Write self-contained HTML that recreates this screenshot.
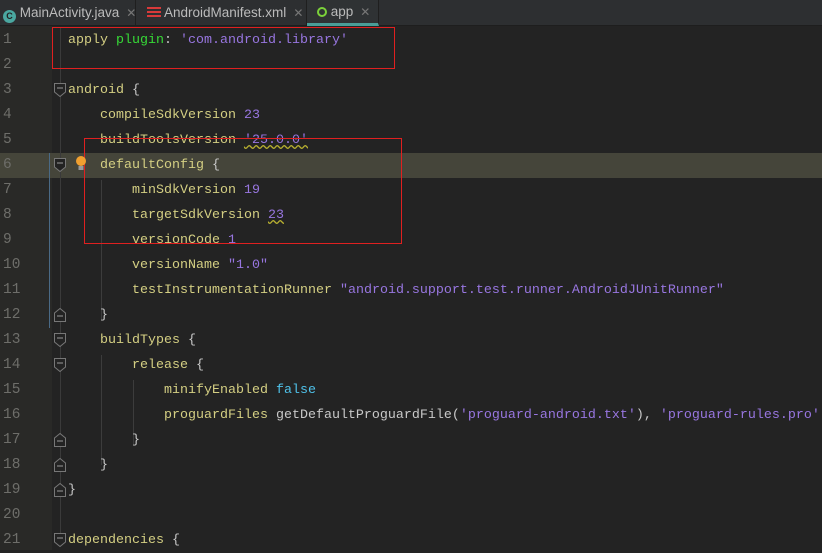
<!DOCTYPE html>
<html><head><meta charset="utf-8"><style>
*{margin:0;padding:0;box-sizing:border-box}
body{width:822px;height:550px;overflow:hidden;background:#232323;font-family:"Liberation Mono",monospace;position:relative}
.tabs{position:absolute;left:0;top:0;width:822px;height:26px;background:#2d2f31;border-bottom:1px solid #1e1e1e;font-family:"Liberation Sans",sans-serif;font-size:13.5px;color:#bbbbbb}
.tab{position:absolute;top:0;height:25px;line-height:25px;border-right:1px solid #1f1f1f;white-space:nowrap;overflow:hidden}
.tab .x{color:#777;font-size:12px;margin-left:7px}
.gutter{position:absolute;left:0;top:26px;width:52px;height:524px;background:#292927}
.ln{position:absolute;left:3px;font-size:14.5px;color:#6e6e6a;height:25px;line-height:25px}
.code{position:absolute;left:0;font-size:13.33px;white-space:pre;height:25px;line-height:25px;color:#d4cf83}
.y{color:#d4cf83}.p{color:#9876e0}.g{color:#36d936}.w{color:#c8c8c8}.c{color:#4fc1e9}
.hl{position:absolute;left:0;top:153px;width:822px;height:25px;background:#45453a}
.guide{position:absolute;width:1px;background:#3c3c3c}
.box{position:absolute;border:1px solid #e02020}
.fold{position:absolute;left:54px;width:12px;height:14px}
</style></head><body>
<div class="tabs">
 <div class="tab" style="left:0;width:136px;padding-left:3px"><span style="display:inline-block;width:13px;height:13px;border-radius:50%;background:#4aa7a0;color:#222;font-size:9px;line-height:13px;text-align:center;font-weight:bold;vertical-align:-2px">C</span> MainActivity.java<span class="x">✕</span></div>
 <div class="tab" style="left:137px;width:170px;padding-left:10px"><span style="display:inline-block;width:14px;height:11px;vertical-align:-1px;background:repeating-linear-gradient(#d83a3a 0 2px,transparent 2px 4px)"></span> AndroidManifest.xml<span class="x">✕</span></div>
 <div class="tab" style="left:307px;width:72px;padding-left:10px;background:#2f3234;border-bottom:3px solid #4a9e98;height:26px;line-height:24px"><span style="display:inline-block;width:10px;height:10px;border-radius:50%;border:2px solid #7bd13a;vertical-align:-1px"></span> app<span class="x">✕</span></div>
</div>
<div class="gutter"></div>
<div class="hl"></div>
<div class="guide" style="left:49px;top:153px;height:175px;background:#4a6a86"></div>
<div class="guide" style="left:60px;top:28px;height:510px;background:#3a3a3a"></div>
<div class="guide" style="left:101px;top:180px;height:140px"></div>
<div class="guide" style="left:101px;top:355px;height:110px"></div>
<div class="guide" style="left:133px;top:380px;height:65px"></div>
<div id="c"></div>
<div class="box" style="left:52px;top:27px;width:343px;height:42px"></div>
<div class="box" style="left:84px;top:138px;width:318px;height:106px"></div>
<svg style="position:absolute;left:74px;top:155px" width="14" height="18"><circle cx="7" cy="6" r="5" fill="#f0a030"/><rect x="4.5" y="11" width="5" height="4" fill="#999"/></svg>
<script>
var L=[
'<span class="y">apply</span> <span class="g">plugin</span><span class="w">: </span><span class="p">\'com.android.library\'</span>',
'',
'<span class="y">android</span> <span class="w">{</span>',
'    compileSdkVersion <span class="p">23</span>',
'    buildToolsVersion <span class="p" style="text-decoration:underline wavy #b8b030">\'25.0.0\'</span>',
'    defaultConfig <span class="w">{</span>',
'        minSdkVersion <span class="p">19</span>',
'        targetSdkVersion <span class="p" style="text-decoration:underline wavy #b8b030">23</span>',
'        versionCode <span class="p">1</span>',
'        versionName <span class="p">"1.0"</span>',
'        testInstrumentationRunner <span class="p">"android.support.test.runner.AndroidJUnitRunner"</span>',
'    <span class="w">}</span>',
'    buildTypes <span class="w">{</span>',
'        release <span class="w">{</span>',
'            minifyEnabled <span class="c">false</span>',
'            proguardFiles <span class="w">getDefaultProguardFile(</span><span class="p">\'proguard-android.txt\'</span><span class="w">), </span><span class="p">\'proguard-rules.pro\'</span>',
'        <span class="w">}</span>',
'    <span class="w">}</span>',
'<span class="w">}</span>',
'',
'<span class="y">dependencies</span> <span class="w">{</span>'];
var open={3:1,6:1,13:1,14:1,21:1},close={12:1,17:1,18:1,19:1};
var h='';
for(var i=0;i<L.length;i++){var t=28+i*25,n=i+1;
h+='<div class="ln" style="top:'+t+'px">'+n+'</div>';
h+='<div class="code" style="left:68px;top:'+t+'px">'+L[i]+'</div>';
if(open[n])h+='<svg class="fold" style="top:'+(t+5)+'px" viewBox="0 0 12 14"><path d="M0.5 0.5H11.5V9L6 13.5L0.5 9Z" fill="'+(n==6?'#222':'#232323')+'" stroke="#777"/><path d="M3 5H9" stroke="#999"/></svg>';
if(close[n])h+='<svg class="fold" style="top:'+(t+5)+'px" viewBox="0 0 12 14"><path d="M0.5 13.5H11.5V5L6 0.5L0.5 5Z" fill="#232323" stroke="#777"/><path d="M3 8H9" stroke="#999"/></svg>';}
document.getElementById('c').innerHTML=h;
</script>
</body></html>
